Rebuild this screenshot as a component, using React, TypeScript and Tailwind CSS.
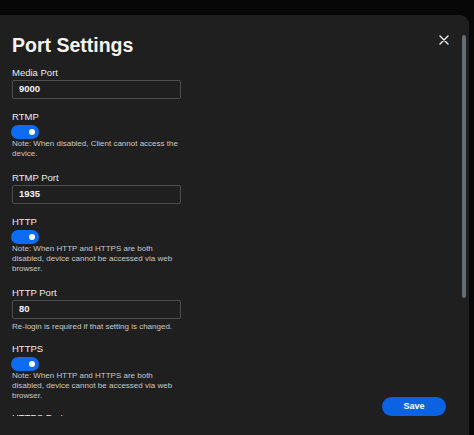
import React, { useState } from 'react';

function Toggle({ on, onChange }: { on: boolean; onChange: () => void }) {
  return (
    <button
      type="button"
      onClick={onChange}
      className={`flex h-[14px] w-[28px] items-center rounded-full px-[4px] ${
        on ? 'justify-end bg-[#0d6cf2]' : 'justify-start bg-[#4a4a4a]'
      }`}
    >
      <span className="block h-[6px] w-[6px] rounded-full bg-white" />
    </button>
  );
}

function PortInput({ value }: { value: string }) {
  return (
    <div className="mt-[1px] flex h-[19px] w-[169px] items-center rounded-[2px] border border-[#4e4e4e] px-[6px] text-[9.5px] font-bold text-[#f2f2f2]">
      {value}
    </div>
  );
}

function Label({ children, className = '' }: { children: React.ReactNode; className?: string }) {
  return <div className={`text-[9.5px] leading-[12px] text-[#ececec] ${className}`}>{children}</div>;
}

function Note({ children, className = '' }: { children: React.ReactNode; className?: string }) {
  return <p className={`w-[170px] text-[8px] leading-[10px] text-[#c9c9c9] ${className}`}>{children}</p>;
}

export default function App() {
  const [rtmp, setRtmp] = useState(true);
  const [http, setHttp] = useState(true);
  const [https, setHttps] = useState(true);

  return (
    <div className="flex h-[435px] w-[474px] flex-col bg-[#070707] font-['Liberation_Sans',Arial,sans-serif]">
      <div className="h-[15px] shrink-0" />
      <div className="flex flex-1">
        {/* Modal */}
        <div className="relative h-[420px] w-[469px] overflow-hidden rounded-tr-[9px] bg-[#1f1f1f]">
          <div className="h-[401px] overflow-hidden pl-[12px] pt-[18px]">
            <h1 className="text-[19.5px] font-bold leading-[24px] text-[#f4f4f4]">Port Settings</h1>

            <Label className="mt-[10px]">Media Port</Label>
            <PortInput value="9000" />

            <Label className="mt-[12px]">RTMP</Label>
            <div className="mt-[2px] -ml-[1px]">
              <Toggle on={rtmp} onChange={() => setRtmp(!rtmp)} />
            </div>
            <Note>Note: When disabled, Client cannot access the device.</Note>

            <Label className="mt-[13px]">RTMP Port</Label>
            <PortInput value="1935" />

            <Label className="mt-[12px]">HTTP</Label>
            <div className="mt-[2px] -ml-[1px]">
              <Toggle on={http} onChange={() => setHttp(!http)} />
            </div>
            <Note>Note: When HTTP and HTTPS are both disabled, device cannot be accessed via web browser.</Note>

            <Label className="mt-[13px]">HTTP Port</Label>
            <PortInput value="80" />
            <Note className="mt-[3px] w-[200px]">Re-login is required if that setting is changed.</Note>

            <Label className="mt-[11px]">HTTPS</Label>
            <div className="mt-[2px] -ml-[1px]">
              <Toggle on={https} onChange={() => setHttps(!https)} />
            </div>
            <Note>Note: When HTTP and HTTPS are both disabled, device cannot be accessed via web browser.</Note>

            <Label className="mt-[11px]">HTTPS Port</Label>
            <PortInput value="443" />
          </div>

          {/* close */}
          <button type="button" className="absolute left-[439px] top-[20px] h-[10px] w-[10px]">
            <svg viewBox="0 0 10 10" className="h-[10px] w-[10px]" fill="none" stroke="#ededed" strokeWidth="1.4" strokeLinecap="round">
              <path d="M1 1L9 9M9 1L1 9" />
            </svg>
          </button>

          {/* scrollbar thumb */}
          <div className="absolute left-[462px] top-[20px] h-[263px] w-[4px] rounded-full bg-[#676b72]" />

          <button
            type="button"
            className="absolute bottom-[19px] right-[23px] h-[19px] w-[64px] rounded-full bg-[#0b63e3] text-[9px] font-bold text-white"
          >
            Save
          </button>
        </div>
      </div>
    </div>
  );
}
